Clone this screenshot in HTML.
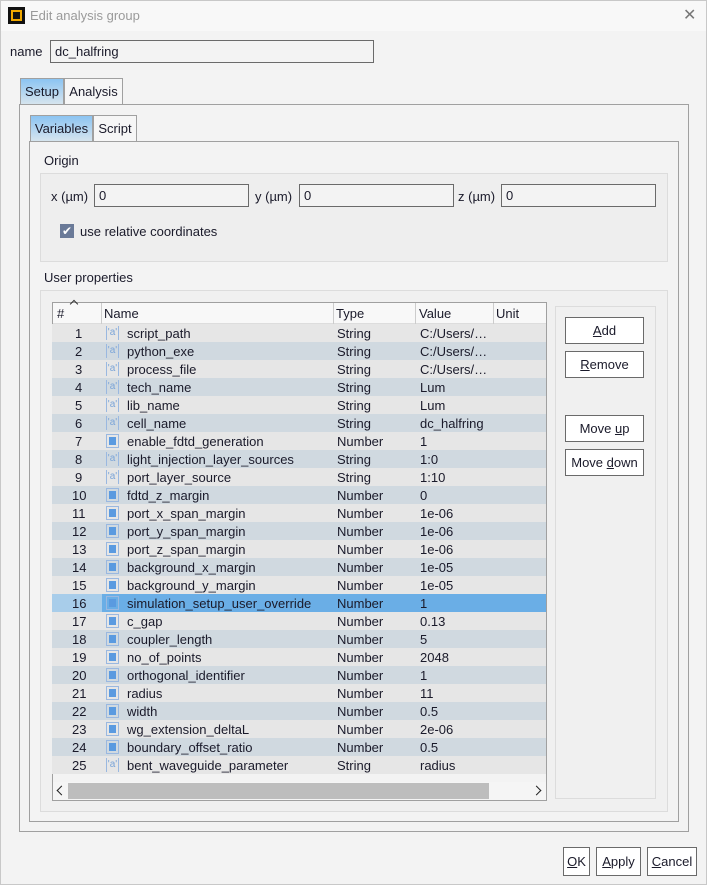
<!DOCTYPE html>
<html><head><meta charset="utf-8"><style>
*{box-sizing:border-box;margin:0;padding:0}
body{width:707px;height:885px;background:#f3f3f3;font-family:"Liberation Sans","DejaVu Sans",sans-serif;font-size:13px;color:#1a1a2a;position:relative;overflow:hidden}
.a{position:absolute}
.win{left:0;top:0;width:707px;height:885px;border:1px solid #c8c8c8;background:#f3f3f3}
.inp{position:absolute;background:#f3f3f3;border:1px solid #6a6a6a;padding-left:4px;line-height:21px}
.btn{position:absolute;background:#fff;border:1px solid #6a6a6a;text-align:center;line-height:25px}
.tab{position:absolute;border:1px solid #a0a0a0;text-align:center;line-height:26px;background:#f6f6f6}
.tab.on{background:linear-gradient(#8cc4f2,#d6e4ee)}
.row{position:absolute;left:52px;width:494px;height:18px;line-height:19px}
.row span{position:absolute;top:0;white-space:nowrap}
.ic{position:absolute;left:54px;top:2px;width:13px;height:14px}
</style></head><body>
<div class="a win"></div>
<div class="a" style="left:1px;top:1px;width:705px;height:30px;background:#f8f8f8"></div>
<div class="a" style="left:8px;top:7px;width:17px;height:17px;background:#111"><div class="a" style="left:3px;top:3px;width:11px;height:11px;border:2px solid #f0a800"></div></div>
<div class="a" style="left:30px;top:8px;color:#9a9a9a;font-size:13px">Edit analysis group</div>
<div class="a" style="left:683px;top:5px;color:#777;font-size:16px">✕</div>
<div class="a" style="left:10px;top:44px">name</div>
<div class="inp" style="left:50px;top:40px;width:324px;height:23px">dc_halfring</div>
<div class="tab on" style="left:20px;top:78px;width:44px;height:27px">Setup</div>
<div class="tab" style="left:64px;top:78px;width:59px;height:27px">Analysis</div>
<div class="a" style="left:19px;top:104px;width:670px;height:728px;border:1px solid #a0a0a0"></div>
<div class="tab on" style="left:30px;top:115px;width:63px;height:27px">Variables</div>
<div class="tab" style="left:93px;top:115px;width:44px;height:27px">Script</div>
<div class="a" style="left:29px;top:141px;width:650px;height:681px;border:1px solid #a0a0a0"></div>
<div class="a" style="left:44px;top:153px">Origin</div>
<div class="a" style="left:40px;top:173px;width:628px;height:89px;border:1px solid #dcdcdc;background:#eeeeee"></div>
<div class="a" style="left:51px;top:189px">x (µm)</div>
<div class="inp" style="left:94px;top:184px;width:155px;height:23px">0</div>
<div class="a" style="left:255px;top:189px">y (µm)</div>
<div class="inp" style="left:299px;top:184px;width:155px;height:23px">0</div>
<div class="a" style="left:458px;top:189px">z (µm)</div>
<div class="inp" style="left:501px;top:184px;width:155px;height:23px">0</div>
<div class="a" style="left:60px;top:224px;width:14px;height:14px;background:#6a7a98;color:#fff;font-size:12px;line-height:14px;text-align:center;font-weight:bold">✔</div>
<div class="a" style="left:80px;top:224px">use relative coordinates</div>
<div class="a" style="left:44px;top:270px">User properties</div>
<div class="a" style="left:40px;top:290px;width:628px;height:522px;border:1px solid #dcdcdc;background:#f0f0f0"></div>
<div class="a" style="left:52px;top:302px;width:495px;height:499px;border:1px solid #a0a0a0;background:#f3f3f3"></div>
<div class="a" style="left:53px;top:303px;width:493px;height:21px;background:#f8f8f8;border-bottom:1px solid #ddd"></div>
<div class="a" style="left:57px;top:306px">#</div>
<div class="a" style="left:71px;top:301px;width:6px;height:6px;border-left:1px solid #333;border-top:1px solid #333;transform:rotate(45deg)"></div>
<div class="a" style="left:101px;top:303px;width:1px;height:21px;background:#ccc"></div>
<div class="a" style="left:104px;top:306px">Name</div>
<div class="a" style="left:333px;top:303px;width:1px;height:21px;background:#ccc"></div>
<div class="a" style="left:336px;top:306px">Type</div>
<div class="a" style="left:415px;top:303px;width:1px;height:21px;background:#ccc"></div>
<div class="a" style="left:419px;top:306px">Value</div>
<div class="a" style="left:493px;top:303px;width:1px;height:21px;background:#ccc"></div>
<div class="a" style="left:496px;top:306px">Unit</div>
<div id="rows"></div>
<script>
var d=[["script_path","S","C:/Users/…"],["python_exe","S","C:/Users/…"],["process_file","S","C:/Users/…"],["tech_name","S","Lum"],["lib_name","S","Lum"],["cell_name","S","dc_halfring"],["enable_fdtd_generation","N","1"],["light_injection_layer_sources","S","1:0"],["port_layer_source","S","1:10"],["fdtd_z_margin","N","0"],["port_x_span_margin","N","1e-06"],["port_y_span_margin","N","1e-06"],["port_z_span_margin","N","1e-06"],["background_x_margin","N","1e-05"],["background_y_margin","N","1e-05"],["simulation_setup_user_override","N","1"],["c_gap","N","0.13"],["coupler_length","N","5"],["no_of_points","N","2048"],["orthogonal_identifier","N","1"],["radius","N","11"],["width","N","0.5"],["wg_extension_deltaL","N","2e-06"],["boundary_offset_ratio","N","0.5"],["bent_waveguide_parameter","S","radius"]];
var h="";
d.forEach(function(r,i){var y=324+i*18;var bg=i==15?"#6aaee6":(i%2?"#d0d9e0":"#e6e6e6");
var ic=r[1]=="S"?'<div class="ic" style="color:#7aa4d8;font-size:10px;line-height:13px;text-align:center;border-left:1px solid #9ab8e0;border-right:1px solid #9ab8e0">\'a\'</div>':'<div class="ic" style="border:1px solid #9ab8e0;padding:2px"><div style="width:100%;height:100%;background:#5a9ae0"></div></div>';
h+='<div class="row" style="top:'+y+'px;background:'+bg+'">'+(i==15?'<div style="position:absolute;left:0;top:0;width:50px;height:18px;background:#a8cdea"></div>':'')+'<span style="left:'+(i<9?23:20)+'px">'+(i+1)+'</span>'+ic+'<span style="left:75px">'+r[0]+'</span><span style="left:285px">'+(r[1]=="S"?"String":"Number")+'</span><span style="left:368px">'+r[2]+'</span></div>';});
document.getElementById("rows").innerHTML=h;
</script>
<div class="a" style="left:53px;top:782px;width:493px;height:18px;background:#f5f5f5"></div>
<div class="a" style="left:68px;top:783px;width:421px;height:16px;background:#bdbdbd"></div>
<div class="a" style="left:58px;top:787px;width:7px;height:7px;border-left:1px solid #222;border-bottom:1px solid #222;transform:rotate(45deg)"></div>
<div class="a" style="left:533px;top:787px;width:7px;height:7px;border-right:1px solid #222;border-top:1px solid #222;transform:rotate(45deg)"></div>
<div class="a" style="left:555px;top:306px;width:101px;height:493px;border:1px solid #dcdcdc;background:#f0f0f0"></div>
<div class="btn" style="left:565px;top:317px;width:79px;height:27px"><u>A</u>dd</div>
<div class="btn" style="left:565px;top:351px;width:79px;height:27px"><u>R</u>emove</div>
<div class="btn" style="left:565px;top:415px;width:79px;height:27px">Move <u>u</u>p</div>
<div class="btn" style="left:565px;top:449px;width:79px;height:27px">Move <u>d</u>own</div>
<div class="btn" style="left:563px;top:847px;width:27px;height:29px;line-height:28px"><u>O</u>K</div>
<div class="btn" style="left:596px;top:847px;width:45px;height:29px;line-height:28px"><u>A</u>pply</div>
<div class="btn" style="left:647px;top:847px;width:50px;height:29px;line-height:28px"><u>C</u>ancel</div>
</body></html>
